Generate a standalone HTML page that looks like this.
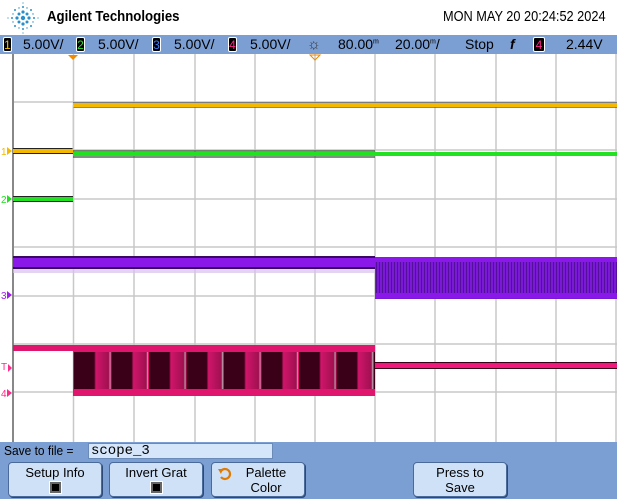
<!DOCTYPE html>
<html><head><meta charset="utf-8"><style>
*{margin:0;padding:0;box-sizing:border-box}
body{width:617px;height:499px;overflow:hidden;background:#fff;font-family:"Liberation Sans",sans-serif;position:relative}
.abs{position:absolute}
.hdr{top:0;left:0;width:617px;height:35px;background:#fff}
.bar{top:35px;left:0;width:617px;height:19px;background:#7c9fd3;font-size:14px;color:#000}
.bar span{position:absolute;top:1px;white-space:nowrap}
.ch{display:inline-block;width:9px;height:15px;background:#000;font-size:12px;line-height:15px;text-align:center;top:2px!important;border:1px solid #fff;border-radius:2px}
.panel{top:442px;left:0;width:617px;height:57px;background:#7c9fd3}
.btn{position:absolute;top:462px;height:35px;background:#cfe1f7;border:1px solid #4a6a9a;border-radius:4px;font-size:13px;text-align:center;line-height:15px;padding-top:2px;box-shadow:1px 1px 0 #2c4a78}
.cb{display:inline-block;width:11px;height:11px;border:2px solid #666;background:#000;outline:1px solid #fff;margin-top:2px}
</style></head><body>
<div class="abs hdr">
<svg class="abs" style="left:6px;top:1px" width="34" height="34" viewBox="0 0 34 34">
<g fill="#2a8fc8">
<circle cx="17" cy="17" r="2.2"/>
<circle cx="17" cy="11" r="1.6"/><circle cx="17" cy="23" r="1.6"/><circle cx="11" cy="17" r="1.6"/><circle cx="23" cy="17" r="1.6"/>
<circle cx="13" cy="13" r="1.5"/><circle cx="21" cy="13" r="1.5"/><circle cx="13" cy="21" r="1.5"/><circle cx="21" cy="21" r="1.5"/>
<circle cx="17" cy="6" r="1"/><circle cx="17" cy="28" r="1"/><circle cx="6" cy="17" r="1"/><circle cx="28" cy="17" r="1"/>
<circle cx="9" cy="9" r="1"/><circle cx="25" cy="9" r="1"/><circle cx="9" cy="25" r="1"/><circle cx="25" cy="25" r="1"/>
<circle cx="17" cy="2" r=".6"/><circle cx="17" cy="32" r=".6"/><circle cx="2" cy="17" r=".6"/><circle cx="32" cy="17" r=".6"/>
<circle cx="13" cy="7" r=".7"/><circle cx="21" cy="7" r=".7"/><circle cx="13" cy="27" r=".7"/><circle cx="21" cy="27" r=".7"/>
<circle cx="7" cy="13" r=".7"/><circle cx="27" cy="13" r=".7"/><circle cx="7" cy="21" r=".7"/><circle cx="27" cy="21" r=".7"/>
</g></svg>
<div class="abs" style="left:47px;top:8px;font-size:15px;font-weight:bold;transform:scaleX(.88);transform-origin:0 0;white-space:nowrap">Agilent Technologies</div>
<div class="abs" style="left:443px;top:8px;font-size:15px;transform:scaleX(.85);transform-origin:0 0;white-space:nowrap">MON MAY 20 20:24:52 2024</div>
</div>
<div class="abs bar">
<span class="ch" style="left:3px;color:#f5c400">1</span><span style="left:23px">5.00V/</span>
<span class="ch" style="left:76px;color:#2ee02e">2</span><span style="left:98px">5.00V/</span>
<span class="ch" style="left:152px;color:#3a7aff">3</span><span style="left:174px">5.00V/</span>
<span class="ch" style="left:228px;color:#ff2a8a">4</span><span style="left:250px">5.00V/</span>
<span style="left:307px;font-size:15px;color:#333">☼</span>
<span style="left:338px">80.00<sup style="font-size:7px">m</sup></span>
<span style="left:395px">20.00<sup style="font-size:7px">m</sup>/</span>
<span style="left:465px">Stop</span>
<span style="left:510px;font-style:italic;font-weight:bold">f</span>
<span class="ch" style="left:533px;color:#ff2a8a;width:12px">4</span>
<span style="left:566px">2.44V</span>
</div>
<svg class="abs" style="left:0;top:54px" width="617" height="388" viewBox="0 54 617 388">
<defs>
<linearGradient id="pg" x1="0" x2="1" y1="0" y2="0">
<stop offset="0" stop-color="#3a0018"/><stop offset=".55" stop-color="#3a0018"/><stop offset=".6" stop-color="#d0156a"/><stop offset=".95" stop-color="#a01050"/><stop offset="1" stop-color="#bbb"/>
</linearGradient>
<pattern id="pk" x="73" y="0" width="37.5" height="500" patternUnits="userSpaceOnUse">
<rect x="0" y="345" width="37.5" height="51" fill="#e0156e"/>
<rect x="1" y="352" width="36.5" height="37" fill="url(#pg)"/>
</pattern>
<pattern id="pp" x="0" y="0" width="3" height="500" patternUnits="userSpaceOnUse">
<rect x="0" y="257" width="3" height="42" fill="#7a1ad6"/>
<rect x="1" y="262" width="1" height="32" fill="#55109a"/>
</pattern>
</defs>
<g stroke="#c8c8c8" stroke-width="1.5">
<line x1="73.5" y1="54" x2="73.5" y2="442"/><line x1="134" y1="54" x2="134" y2="442"/><line x1="195" y1="54" x2="195" y2="442"/><line x1="255" y1="54" x2="255" y2="442"/><line x1="315" y1="54" x2="315" y2="442"/><line x1="375" y1="54" x2="375" y2="442"/><line x1="435" y1="54" x2="435" y2="442"/><line x1="496" y1="54" x2="496" y2="442"/><line x1="556" y1="54" x2="556" y2="442"/><line x1="616" y1="54" x2="616" y2="442"/>
<line x1="13" y1="102" x2="617" y2="102"/><line x1="13" y1="150" x2="617" y2="150"/><line x1="13" y1="199" x2="617" y2="199"/><line x1="13" y1="247" x2="617" y2="247"/><line x1="13" y1="296" x2="617" y2="296"/><line x1="13" y1="344" x2="617" y2="344"/><line x1="13" y1="392" x2="617" y2="392"/>
</g>
<line x1="13" y1="54" x2="13" y2="442" stroke="#888" stroke-width="2"/>
<path d="M68 55 L78 55 L73 60Z" fill="#f08a00"/>
<path d="M310 55 L320 55 L315 60Z" fill="none" stroke="#f08a00"/>
<rect x="13" y="148" width="60" height="6" fill="#222"/><rect x="13" y="149" width="60" height="4" fill="#f5b800"/>
<rect x="73" y="102" width="544" height="6" fill="#555" opacity=".7"/><rect x="73" y="103" width="544" height="4" fill="#f5b800"/>
<line x1="73" y1="105" x2="73" y2="150" stroke="#ccc"/>
<rect x="13" y="196" width="60" height="6" fill="#222"/><rect x="13" y="197" width="60" height="4" fill="#22e022"/>
<rect x="73" y="150" width="302" height="8" fill="#2a4a2a" opacity=".6"/>
<rect x="73" y="152" width="544" height="4" fill="#22e022"/>
<rect x="13" y="256" width="362" height="13" fill="#3a0a60"/><rect x="13" y="258" width="362" height="9" fill="#8a18e8"/>
<rect x="13" y="269" width="362" height="4" fill="#d8c0ec" opacity=".7"/>
<rect x="375" y="256" width="242" height="43" fill="url(#pp)"/>
<rect x="375" y="257" width="242" height="5" fill="#8a18e8"/><rect x="375" y="293" width="242" height="5" fill="#8a18e8"/>
<rect x="13" y="345" width="60" height="6" fill="#e0156e"/>
<rect x="73" y="345" width="302" height="51" fill="url(#pk)"/>
<rect x="375" y="362" width="242" height="7" fill="#3a0018"/><rect x="375" y="363" width="242" height="5" fill="#f0187a"/>
<g font-family="Liberation Sans" font-size="10">
<text x="1" y="155" fill="#f5b800">1</text><path d="M7 147 L12 151 L7 155Z" fill="#f5b800"/>
<text x="1" y="203" fill="#22e022">2</text><path d="M7 195 L12 199 L7 203Z" fill="#22e022"/>
<text x="1" y="299" fill="#a020f0">3</text><path d="M7 291 L12 295 L7 299Z" fill="#a020f0"/>
<text x="1" y="370" fill="#ff2a8a">T</text><path d="M8 364 L12 368 L8 372Z" fill="#ff2a8a"/>
<text x="1" y="397" fill="#ff2a8a">4</text><path d="M7 389 L12 393 L7 397Z" fill="#ff2a8a"/>
</g>
</svg>
<div class="abs panel"></div>
<div class="abs" style="left:4px;top:443px;font-size:13px;transform:scaleX(.92);transform-origin:0 0">Save to file =</div>
<div class="abs" style="left:88px;top:443px;width:185px;height:16px;background:#d6e6fa;border:1px solid #6a8ab8;font-family:'Liberation Mono',monospace;font-size:14px;line-height:14px;padding-left:2px">scope_3</div>
<div class="btn" style="left:8px;width:94px">Setup Info<br><span class="cb"></span></div>
<div class="btn" style="left:109px;width:94px">Invert Grat<br><span class="cb"></span></div>
<div class="btn" style="left:211px;width:94px;padding-left:16px">Palette<br>Color
<svg class="abs" style="left:5px;top:3px" width="16" height="16" viewBox="0 0 16 16"><path d="M4 5 A5 5 0 1 1 4 11" fill="none" stroke="#e07a00" stroke-width="2.2"/><path d="M1 3 L6 3 L4 8Z" fill="#e07a00"/></svg></div>
<div class="btn" style="left:413px;width:94px">Press to<br>Save</div>
</body></html>
